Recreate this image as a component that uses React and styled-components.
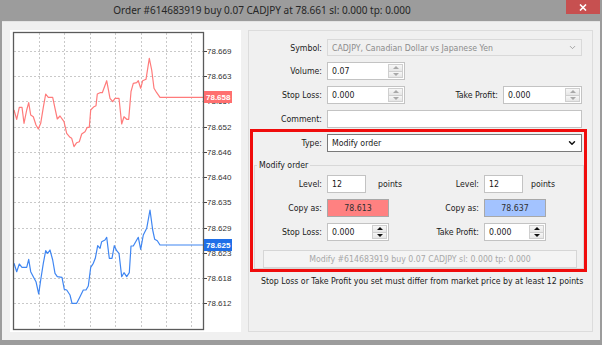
import React from 'react'
import styled, { createGlobalStyle } from 'styled-components'
import { ChevronDown } from 'lucide-react'

const GlobalStyle = createGlobalStyle`
  body {
    margin: 0;
    background: #fff;
    font-family: "DejaVu Sans Condensed", "Liberation Sans", sans-serif;
  }
  * { box-sizing: border-box; }
`

const Page = styled.div`
  width: 602px;
  height: 358px;
  background: #fff;
`
const Window = styled.div`
  width: 602px;
  height: 345px;
  background: #9c9c9c;
  display: flex;
  flex-direction: column;
  padding: 0 2px 5px 2px;
`
const TitleBar = styled.div`
  height: 21px;
  display: flex;
  align-items: flex-start;
`
const TitleText = styled.div`
  flex: 1;
  text-align: center;
  padding: 3px 44px 0 0;
  font-family: "Noto Sans", sans-serif;
  font-size: 10px;
  line-height: 15px;
  color: #262626;
`
const CloseButton = styled.div`
  width: 34px;
  height: 14px;
  background: #c75050;
  display: flex;
  align-items: center;
  justify-content: center;
`
const Body = styled.div`
  flex: 1;
  background: #f0f0f0;
  border-top: 1px solid #e4e4e4;
  display: flex;
  gap: 7px;
  padding: 8px 7px 8px 8px;
`
const ChartPanel = styled.div`
  width: 231px;
  background: #fff;
  flex-shrink: 0;
  svg { display: block; }
`
const FormPanel = styled.div`
  flex: 1;
  border: 1px solid #dcdcdc;
  padding-top: 8px;
  display: flex;
  flex-direction: column;
  font-size: 8.7px;
  color: #1a1a1a;
`
const Fields = styled.div`
  display: flex;
  flex-direction: column;
  gap: 6px;
`
const Row = styled.div`
  display: flex;
  align-items: center;
  height: ${p => p.$h || 18}px;
`
const Label = styled.div`
  width: ${p => p.$w}px;
  flex-shrink: 0;
  text-align: right;
  padding-right: 5px;
  white-space: nowrap;
`
const ComboBox = styled.div`
  width: ${p => p.$w}px;
  height: 100%;
  border: 1px solid ${p => (p.$disabled ? '#d9d9d9' : '#7a7a7a')};
  background: ${p => (p.$disabled ? '#f0f0f0' : '#fff')};
  color: ${p => (p.$disabled ? '#8c8c8c' : '#1a1a1a')};
  display: flex;
  align-items: center;
  justify-content: space-between;
  padding: 0 4px 0 4px;
`
const TextInput = styled.div`
  width: ${p => p.$w}px;
  height: 18px;
  border: 1px solid #c3c3c3;
  background: #fff;
  display: flex;
  align-items: center;
  padding-left: 4px;
`
const SpinBox = styled.div`
  width: ${p => p.$w}px;
  height: 18px;
  border: 1px solid #c3c3c3;
  background: #fff;
  display: flex;
`
const SpinValue = styled.div`
  flex: 1;
  display: flex;
  align-items: center;
  padding-left: 4px;
`
const Spinner = styled.div`
  width: 16px;
  display: flex;
  flex-direction: column;
  padding: 1px 1px 1px 0;
`
const SpinButton = styled.div`
  flex: 1;
  display: flex;
  align-items: center;
  justify-content: center;
  background: linear-gradient(#f7f7f7, #e6e6e6);
  border: 1px solid #cfcfcf;
  & + & { border-top: none; }
`
const Arrow = styled.span`
  width: 0;
  height: 0;
  border-left: 3px solid transparent;
  border-right: 3px solid transparent;
  ${p => (p.$up ? `border-bottom: 3px solid ${p.$c};` : `border-top: 3px solid ${p.$c};`)}
`
const Highlight = styled.div`
  margin: 1px 0 0 1px;
  width: 337px;
  border: 3px solid #f00c0c;
  padding-top: 2px;
`
const Group = styled.fieldset`
  margin: 8px 0 0 1px;
  width: 330px;
  border: 1px solid #d8d8d8;
  padding: 0;
  min-width: 0;
`
const Legend = styled.legend`
  margin-left: 2px;
  padding: 0 2px;
  line-height: 10px;
`
const GroupRow = styled.div`
  display: grid;
  grid-template-columns: 150px 1fr;
  height: 18px;
  margin-top: ${p => p.$mt}px;
`
const Half = styled.div`
  display: flex;
  align-items: center;
`
const Unit = styled.span`
  margin-left: ${p => p.$ml}px;
`
const CopyBox = styled.div`
  width: 62px;
  height: 18px;
  background: ${p => p.$bg};
  border: 1px solid #a8a8a8;
  display: flex;
  align-items: center;
  justify-content: center;
  color: #303030;
`
const ActionButton = styled.div`
  margin: 9px 0 0 8px;
  width: 314px;
  height: 18px;
  background: #f4f4f4;
  border: 1px solid #d6d6d6;
  color: #a8a8a8;
  display: flex;
  align-items: center;
  justify-content: center;
`
const Note = styled.div`
  margin-top: 4px;
  padding-left: 12px;
  line-height: 10px;
`

const redPts = [
  [14, 110], [16.7, 119.3], [19.3, 107.3], [22, 107.3], [24, 123.3], [26.7, 110], [28.7, 102.7],
  [30.7, 115], [33.3, 116.7], [36, 125], [38.3, 129], [40.7, 123.3], [43.3, 107.3], [45.7, 94],
  [48.3, 97.3], [52.7, 97.3], [55, 108.3], [57.3, 119], [60, 116], [64, 121.7], [66.7, 133.3],
  [70, 137.3], [71.7, 138.3], [74, 146.7], [76.7, 142.7], [79.3, 141.7], [81.7, 134], [85, 131.7],
  [87.3, 127.3], [89.3, 127.3], [90.7, 110], [94, 106.7], [96, 105.7], [97.3, 94], [100, 92.7],
  [102.3, 92.7], [106.7, 80.7], [110, 98.3], [112.7, 101.7], [115, 98.3], [119, 98.3], [121.7, 124],
  [124, 116.7], [126.7, 119.3], [128.7, 119.3], [131, 91.7], [133.3, 83.3], [136.7, 82.7],
  [138.3, 80.7], [140.7, 88.3], [142.7, 80.7], [146, 79.3], [149.3, 58.3], [151.7, 70],
  [154, 88.3], [156.7, 92.7], [160, 97.3], [204, 97.3],
]
const bluePts = [
  [14, 263.3], [16.7, 271.7], [19.3, 264], [22, 267.3], [26.7, 267.3], [28.7, 259.3], [30.7, 271.7],
  [33.3, 276.7], [36, 281.7], [38.7, 294], [40.7, 280], [43.3, 263.3], [45.7, 250.7], [47.7, 253.3],
  [50, 250], [52.7, 260], [55, 273.3], [57.3, 276.7], [62, 277.3], [64.3, 289.3], [66.7, 290],
  [70, 295], [72, 303.3], [76.7, 303.3], [80, 296.7], [83.3, 290], [86, 290], [88.3, 286],
  [90.7, 267.3], [93.3, 263.3], [95.3, 258.3], [97.7, 245.7], [100, 248.3], [101.7, 241.7],
  [105, 240], [106.7, 237.3], [109.3, 258.3], [112, 258.3], [114.3, 245.7], [116.7, 250.7],
  [119, 253.3], [121.7, 276.7], [124, 272.7], [126.7, 276.7], [129.3, 272.7], [131, 246],
  [133.3, 246], [136.7, 240], [138.3, 237.3], [140.7, 249.3], [143.3, 235], [146.7, 228.3],
  [150, 210], [152.7, 230], [154.7, 239.3], [157.3, 240.7], [160, 245], [204, 245],
]
const levels = [
  [51, '78.669'], [76, '78.663'], [101, '78.657'], [127, '78.652'], [152, '78.646'], [177, '78.640'],
  [202, '78.635'], [228, '78.629'], [253, '78.623'], [278, '78.618'], [303, '78.612'],
]
const verticals = [39, 64, 90, 115, 141, 166, 191]

const toPoints = pts => pts.map(p => p.join(',')).join(' ')

const PriceChart = () => (
  <svg width="231" height="302" viewBox="10 30 231 302">
    <g stroke="#c9c9c9" strokeWidth="1" strokeDasharray="2 2">
      {verticals.map(x => (
        <line key={x} x1={x + 0.5} y1="33" x2={x + 0.5} y2="329" />
      ))}
      {levels.map(([y]) => (
        <line key={y} x1="14" y1={y + 0.5} x2="203" y2={y + 0.5} />
      ))}
    </g>
    <g fill="#333" fontSize="8" fontFamily="Liberation Sans, sans-serif">
      {levels.map(([y, t]) => (
        <g key={t}>
          <line x1="203" y1={y + 0.5} x2="207" y2={y + 0.5} stroke="#444" strokeWidth="1" />
          <text x="207" y={y + 3}>{t}</text>
        </g>
      ))}
    </g>
    <polyline points={toPoints(redPts)} fill="none" stroke="#ff7b7b" strokeWidth="1.2" strokeLinejoin="round" />
    <polyline points={toPoints(bluePts)} fill="none" stroke="#3f86f2" strokeWidth="1.2" strokeLinejoin="round" />
    <rect x="13.5" y="32.5" width="190" height="297" fill="none" stroke="#5b5b5b" strokeWidth="1.3" />
    <rect x="204" y="91" width="28" height="12" fill="#ff6f6f" />
    <text x="206" y="100" fontSize="8" fontWeight="bold" fill="#fff" fontFamily="Liberation Sans, sans-serif">78.658</text>
    <rect x="204" y="239" width="28" height="12" fill="#1f6fe8" />
    <text x="206" y="248" fontSize="8" fontWeight="bold" fill="#fff" fontFamily="Liberation Sans, sans-serif">78.625</text>
  </svg>
)

const Spin = ({ value, w, dark }) => (
  <SpinBox $w={w}>
    <SpinValue>{value}</SpinValue>
    <Spinner>
      <SpinButton><Arrow $up $c={dark ? '#111' : '#a8a8a8'} /></SpinButton>
      <SpinButton><Arrow $c={dark ? '#111' : '#a8a8a8'} /></SpinButton>
    </Spinner>
  </SpinBox>
)

const App = () => (
  <Page>
    <GlobalStyle />
    <Window>
      <TitleBar>
        <TitleText>Order #614683919 buy 0.07 CADJPY at 78.661 sl: 0.000 tp: 0.000</TitleText>
        <CloseButton>
          <svg width="8" height="7" viewBox="0 0 8 7">
            <path d="M1 0.5 L7 6.5 M7 0.5 L1 6.5" stroke="#fff" strokeWidth="1.6" />
          </svg>
        </CloseButton>
      </TitleBar>
      <Body>
        <ChartPanel>
          <PriceChart />
        </ChartPanel>
        <FormPanel>
          <Fields>
            <Row $h={17}>
              <Label $w={78}>Symbol:</Label>
              <ComboBox $w={255} $disabled>
                <span>CADJPY, Canadian Dollar vs Japanese Yen</span>
                <ChevronDown size={9} strokeWidth={2} color="#8c8c8c" />
              </ComboBox>
            </Row>
            <Row>
              <Label $w={78}>Volume:</Label>
              <Spin value="0.07" w={78} />
            </Row>
            <Row>
              <Label $w={78}>Stop Loss:</Label>
              <Spin value="0.000" w={78} />
              <Label $w={98}>Take Profit:</Label>
              <Spin value="0.000" w={79} />
            </Row>
            <Row>
              <Label $w={78}>Comment:</Label>
              <TextInput $w={255} />
            </Row>
          </Fields>
          <Highlight>
            <Row>
              <Label $w={74}>Type:</Label>
              <ComboBox $w={255}>
                <span>Modify order</span>
                <ChevronDown size={10} strokeWidth={3.5} color="#111" />
              </ComboBox>
            </Row>
            <Group>
              <Legend>Modify order</Legend>
              <GroupRow $mt={5}>
                <Half>
                  <Label $w={72}>Level:</Label>
                  <TextInput $w={39}>12</TextInput>
                  <Unit $ml={12}>points</Unit>
                </Half>
                <Half>
                  <Label $w={79}>Level:</Label>
                  <TextInput $w={39}>12</TextInput>
                  <Unit $ml={8}>points</Unit>
                </Half>
              </GroupRow>
              <GroupRow $mt={6}>
                <Half>
                  <Label $w={72}>Copy as:</Label>
                  <CopyBox $bg="#ff8181">78.613</CopyBox>
                </Half>
                <Half>
                  <Label $w={79}>Copy as:</Label>
                  <CopyBox $bg="#a3c3ff">78.637</CopyBox>
                </Half>
              </GroupRow>
              <GroupRow $mt={6}>
                <Half>
                  <Label $w={72}>Stop Loss:</Label>
                  <Spin value="0.000" w={62} dark />
                </Half>
                <Half>
                  <Label $w={79}>Take Profit:</Label>
                  <Spin value="0.000" w={62} dark />
                </Half>
              </GroupRow>
              <ActionButton>Modify #614683919 buy 0.07 CADJPY sl: 0.000 tp: 0.000</ActionButton>
            </Group>
          </Highlight>
          <Note>Stop Loss or Take Profit you set must differ from market price by at least 12 points</Note>
        </FormPanel>
      </Body>
    </Window>
  </Page>
)

export default App
